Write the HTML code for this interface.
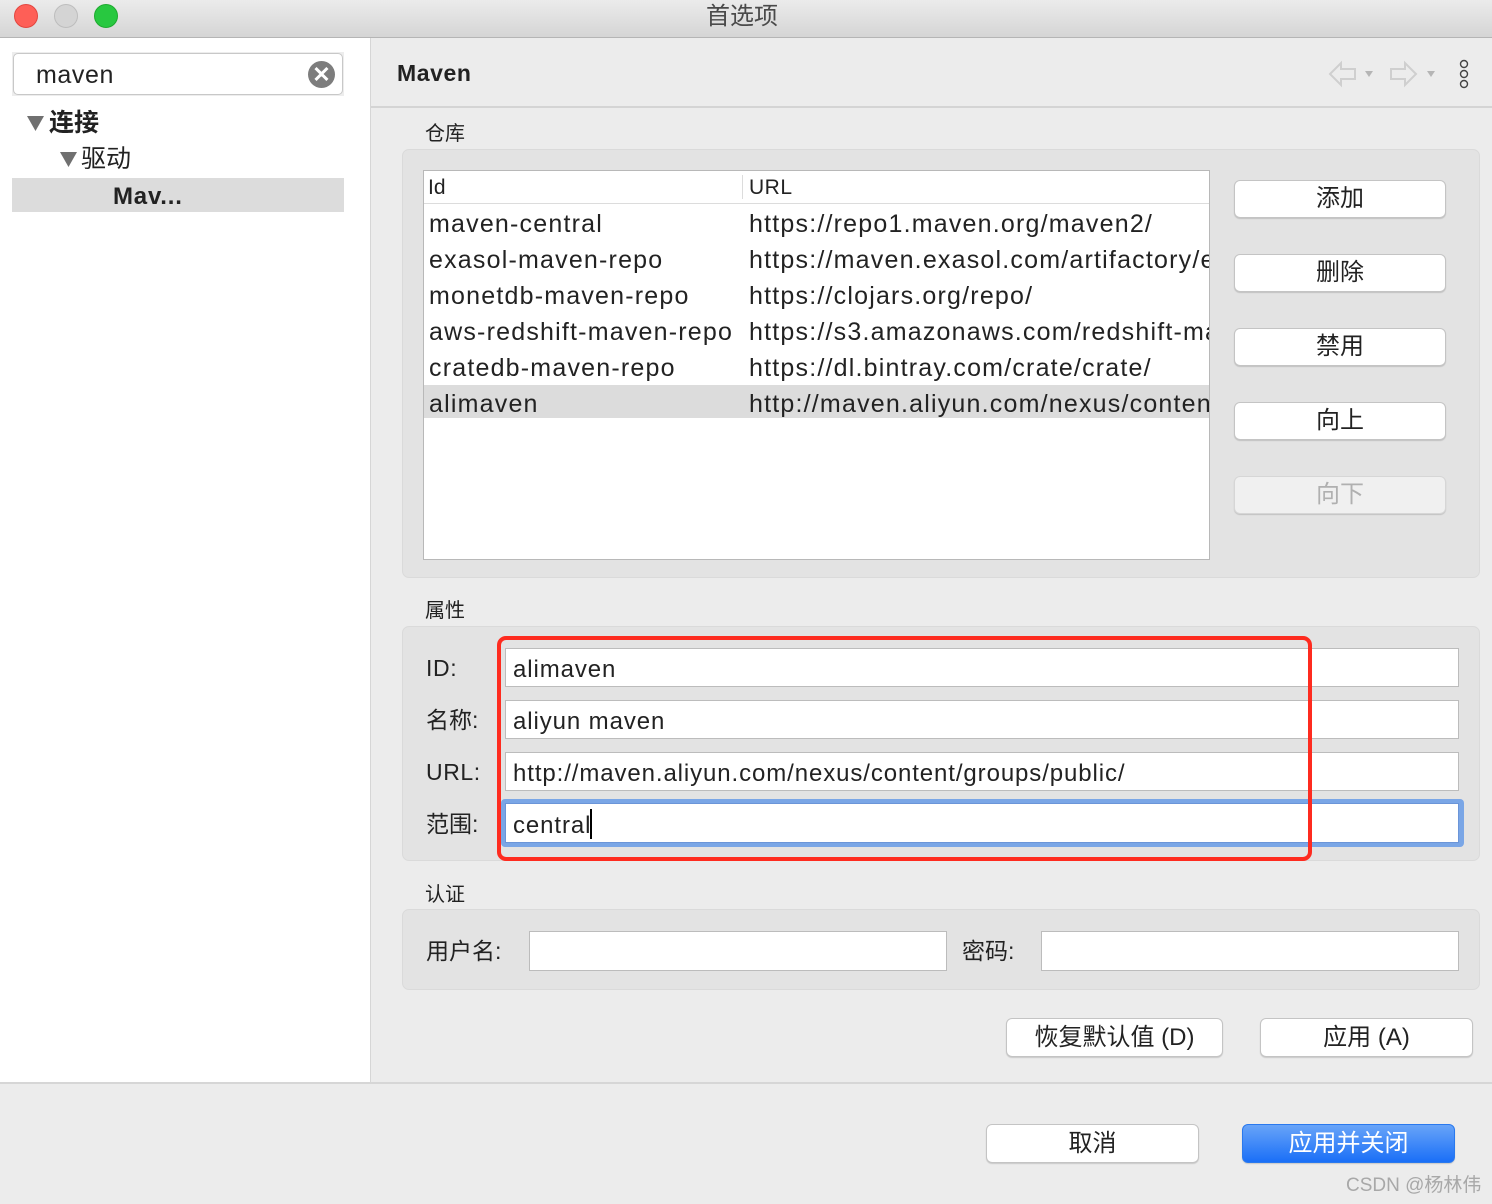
<!DOCTYPE html>
<html><head><meta charset="utf-8"><style>
*{margin:0;padding:0;box-sizing:border-box}
body{width:1492px;height:1204px;position:relative;overflow:hidden;background:#ececec;font-family:"Liberation Sans","Noto Sans CJK SC",sans-serif;color:#222}
.a{position:absolute}
.t{position:absolute;white-space:nowrap;line-height:1}
.btn{position:absolute;background:#fff;border:1px solid #c4c4c4;border-radius:6px;box-shadow:0 1px 1px rgba(0,0,0,.15);text-align:center;font-size:24px;color:#222}
.inp{position:absolute;background:#fff;border:1px solid #bcbcbc;font-size:24px;padding-left:7px;letter-spacing:0.9px}
.grp{position:absolute;background:#e3e3e3;border:1px solid #dadada;border-radius:7px}
.row{position:absolute;left:1px;width:784px;height:36px;font-size:25px;letter-spacing:1.2px}
.row span{position:absolute;top:5px;white-space:nowrap}
</style></head><body>
<div class="a" style="left:0;top:0;width:1492px;height:38px;background:linear-gradient(#ebebeb,#d5d5d5);border-bottom:1px solid #b5b5b5"></div>
<div class="a" style="left:14px;top:4px;width:24px;height:24px;border-radius:50%;background:#fe5f57;border:1px solid #e2463f"></div>
<div class="a" style="left:54px;top:4px;width:24px;height:24px;border-radius:50%;background:#d4d4d4;border:1px solid #bdbdbd"></div>
<div class="a" style="left:94px;top:4px;width:24px;height:24px;border-radius:50%;background:#28c840;border:1px solid #1eaa2f"></div>
<div class="t" style="left:706px;top:5px;font-size:24px;color:#4a4a4a">首选项</div>
<div class="a" style="left:0;top:38px;width:371px;height:1044px;background:#fff;border-right:1px solid #d6d6d6"></div>
<div class="a" style="left:12px;top:52px;width:332px;height:44px;background:#ededed"></div>
<div class="a" style="left:13px;top:53px;width:330px;height:42px;background:#fff;border:1px solid #c8c8c8;border-radius:5px"></div>
<div class="t" style="left:36px;top:63px;font-size:25px;letter-spacing:0.6px">maven</div>
<div class="a" style="left:308px;top:61px;width:27px;height:27px;border-radius:50%;background:#7d7d7d;color:#fff;font-size:22px;font-weight:bold;text-align:center;line-height:27px">✕</div>
<svg class="a" style="left:27px;top:116px" width="18" height="16"><path d="M0 0H17L8.5 15Z" fill="#707070"/></svg>
<div class="t" style="left:49px;top:111px;font-size:25px;font-weight:bold">连接</div>
<svg class="a" style="left:60px;top:152px" width="18" height="16"><path d="M0 0H17L8.5 15Z" fill="#707070"/></svg>
<div class="t" style="left:81px;top:147px;font-size:25px">驱动</div>
<div class="a" style="left:12px;top:178px;width:332px;height:34px;background:#dcdcdc"></div>
<div class="t" style="left:113px;top:185px;font-size:24px;font-weight:bold;letter-spacing:0.8px">Mav...</div>
<div class="t" style="left:397px;top:62px;font-size:23px;font-weight:bold;letter-spacing:0.6px">Maven</div>
<div class="a" style="left:371px;top:106px;width:1121px;height:2px;background:#d4d4d4"></div>
<svg class="a" style="left:1325px;top:58px" width="150" height="34" viewBox="0 0 150 34">
<path d="M5 16 L16 5 V11 H30 V21 H16 V27 Z" fill="none" stroke="#cfcfcf" stroke-width="2"/>
<path d="M40 13 L48 13 L44 19Z" fill="#b5b5b5"/>
<path d="M91 16 L80 5 V11 H66 V21 H80 V27 Z" fill="none" stroke="#cfcfcf" stroke-width="2"/>
<path d="M102 13 L110 13 L106 19Z" fill="#b5b5b5"/>
<circle cx="139" cy="6" r="3.5" fill="none" stroke="#444" stroke-width="1.4"/>
<circle cx="139" cy="16" r="3.5" fill="none" stroke="#444" stroke-width="1.4"/>
<circle cx="139" cy="26" r="3.5" fill="none" stroke="#444" stroke-width="1.4"/>
</svg>
<div class="t" style="left:425px;top:124px;font-size:20px">仓库</div>
<div class="grp" style="left:402px;top:149px;width:1078px;height:429px"></div>
<div class="a" style="left:423px;top:170px;width:787px;height:390px;background:#fff;border:1px solid #b8b8b8">
 <div class="a" style="left:0;top:0;width:785px;height:33px;border-bottom:1px solid #dcdcdc"></div>
 <div class="a" style="left:318px;top:4px;width:1px;height:24px;background:#dcdcdc"></div>
 <div class="t" style="left:4px;top:6px;font-size:21px">Id</div>
 <div class="t" style="left:325px;top:6px;font-size:21px;letter-spacing:0.5px">URL</div>
 <div style="position:absolute;left:0;top:0;width:785px;height:388px;overflow:hidden">
 <div class="row" style="top:34px"><span style="left:4px">maven-central</span><span style="left:324px">https://repo1.maven.org/maven2/</span></div>
 <div class="row" style="top:70px"><span style="left:4px">exasol-maven-repo</span><span style="left:324px">https://maven.exasol.com/artifactory/exasol</span></div>
 <div class="row" style="top:106px"><span style="left:4px">monetdb-maven-repo</span><span style="left:324px">https://clojars.org/repo/</span></div>
 <div class="row" style="top:142px"><span style="left:4px">aws-redshift-maven-repo</span><span style="left:324px">https://s3.amazonaws.com/redshift-maven</span></div>
 <div class="row" style="top:178px"><span style="left:4px">cratedb-maven-repo</span><span style="left:324px">https://dl.bintray.com/crate/crate/</span></div>
 <div class="row" style="top:214px;left:0;width:785px;height:33px;background:#dcdcdc"><span style="left:5px">alimaven</span><span style="left:325px">http://maven.aliyun.com/nexus/content/groups</span></div>
 </div>
</div>
<div class="btn" style="left:1234px;top:180px;width:212px;height:38px;line-height:36px">添加</div>
<div class="btn" style="left:1234px;top:254px;width:212px;height:38px;line-height:36px">删除</div>
<div class="btn" style="left:1234px;top:328px;width:212px;height:38px;line-height:36px">禁用</div>
<div class="btn" style="left:1234px;top:402px;width:212px;height:38px;line-height:36px">向上</div>
<div class="btn" style="left:1234px;top:476px;width:212px;height:38px;line-height:36px;background:#f0f0f0;color:#b0b0b0;border-color:#d6d6d6">向下</div>
<div class="t" style="left:425px;top:601px;font-size:20px">属性</div>
<div class="grp" style="left:402px;top:626px;width:1078px;height:235px"></div>
<div class="t" style="left:426px;top:657px;font-size:23px;letter-spacing:0.6px">ID:</div>
<div class="t" style="left:426px;top:709px;font-size:23px">名称:</div>
<div class="t" style="left:426px;top:761px;font-size:23px;letter-spacing:0.6px">URL:</div>
<div class="t" style="left:426px;top:813px;font-size:23px">范围:</div>
<div class="inp" style="left:505px;top:648px;width:954px;height:39px;line-height:41px">alimaven</div>
<div class="inp" style="left:505px;top:700px;width:954px;height:39px;line-height:41px">aliyun maven</div>
<div class="inp" style="left:505px;top:752px;width:954px;height:39px;line-height:41px">http://maven.aliyun.com/nexus/content/groups/public/</div>
<div class="a" style="left:501px;top:799px;width:963px;height:48px;background:#7aa6e6;border-radius:4px"></div>
<div class="inp" style="left:505px;top:803px;width:954px;height:40px;line-height:43px;border-color:#6b95d8">central<span style="display:inline-block;width:2px;height:30px;background:#000;vertical-align:middle;margin-top:-6px;margin-left:-1px"></span></div>
<div class="a" style="left:497px;top:636px;width:815px;height:225px;border:4px solid #fe2b1f;border-radius:9px"></div>
<div class="t" style="left:425px;top:885px;font-size:20px">认证</div>
<div class="grp" style="left:402px;top:909px;width:1078px;height:81px"></div>
<div class="t" style="left:426px;top:940px;font-size:23px">用户名:</div>
<div class="inp" style="left:529px;top:931px;width:418px;height:40px"></div>
<div class="t" style="left:962px;top:940px;font-size:23px">密码:</div>
<div class="inp" style="left:1041px;top:931px;width:418px;height:40px"></div>
<div class="btn" style="left:1006px;top:1018px;width:217px;height:39px;line-height:37px">恢复默认值 (D)</div>
<div class="btn" style="left:1260px;top:1018px;width:213px;height:39px;line-height:37px">应用 (A)</div>
<div class="a" style="left:0;top:1082px;width:1492px;height:2px;background:#d6d6d6"></div>
<div class="btn" style="left:986px;top:1124px;width:213px;height:39px;line-height:37px">取消</div>
<div class="btn" style="left:1242px;top:1124px;width:213px;height:39px;line-height:37px;background:linear-gradient(#68a4f8,#1a6ff7);color:#fff;border-color:#2a79ee">应用并关闭</div>
<div class="t" style="left:1346px;top:1176px;font-size:19px;color:#a8a8a8">CSDN @杨林伟</div>
</body></html>
